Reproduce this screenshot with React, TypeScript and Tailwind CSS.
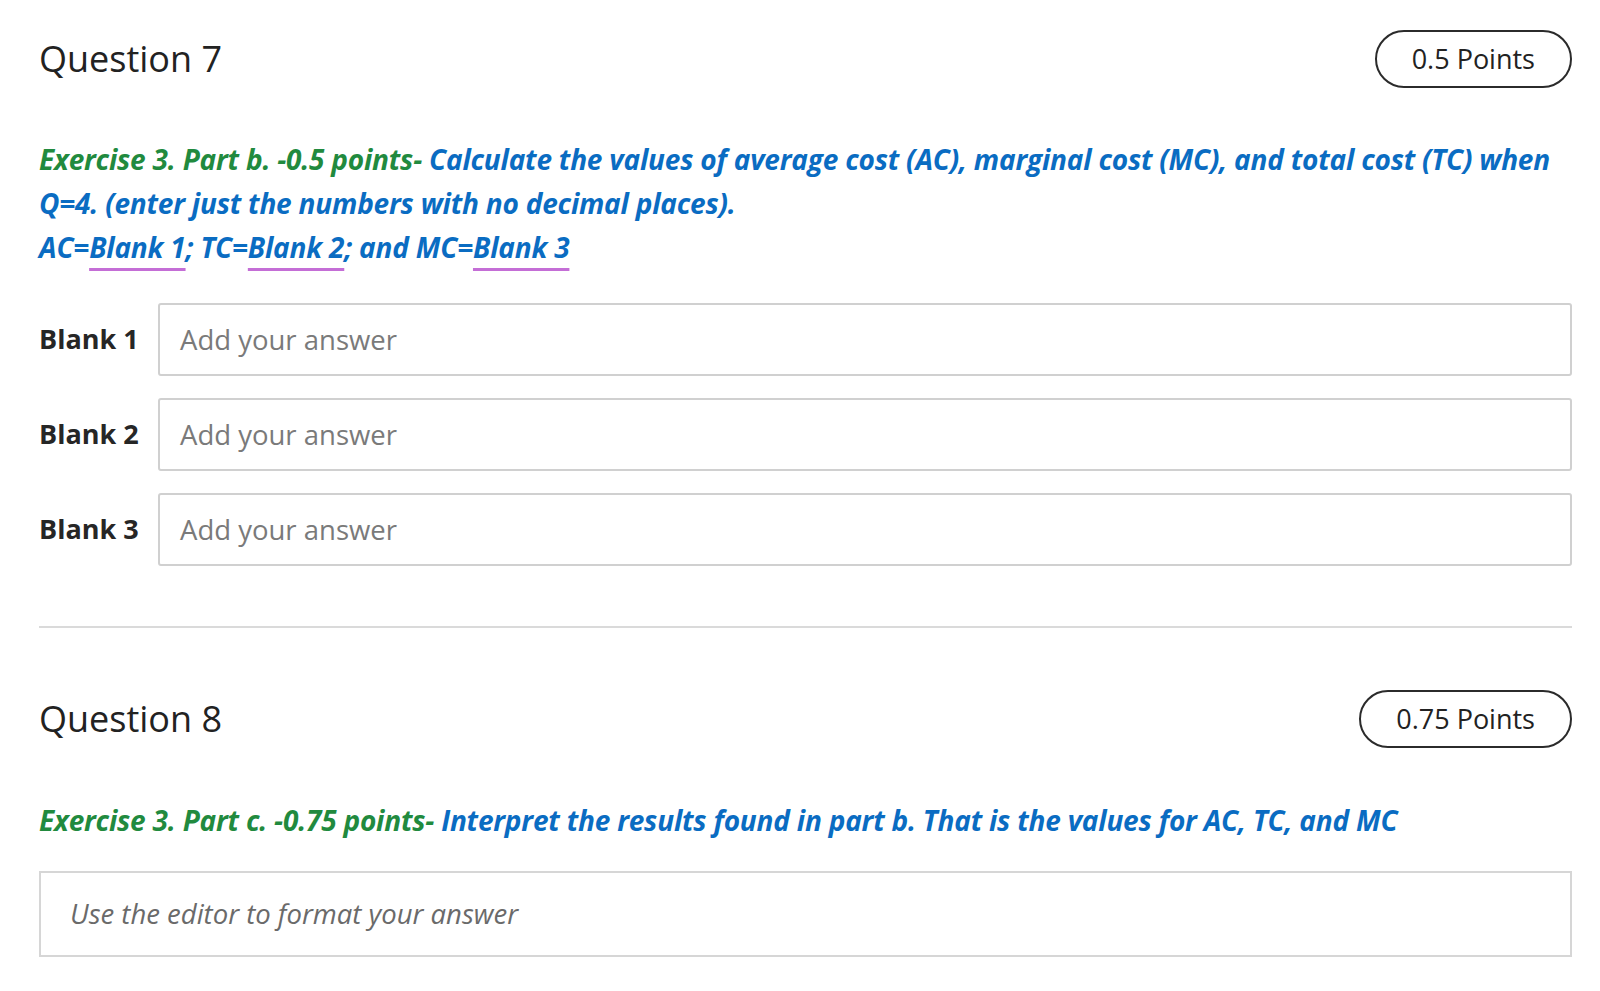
const font = { fontFamily: '"Open Sans", "Liberation Sans", sans-serif' };

function PointsPill({ label }: { label: string }) {
  return (
    <div className="flex h-[58px] items-center rounded-full border-2 border-[#2b2b2b] px-[35px] text-[27px] font-medium text-[#222222]">
      {label}
    </div>
  );
}

function Blank({ children }: { children: React.ReactNode }) {
  return (
    <span className="underline decoration-[#c46ed6] decoration-[3px] underline-offset-[10px]">
      {children}
    </span>
  );
}

function BlankRow({ n }: { n: number }) {
  return (
    <div className="flex items-center">
      <div className="w-[119px] shrink-0 text-[27px] font-bold text-[#262626]">Blank {n}</div>
      <div className="flex h-[73px] flex-1 items-center rounded-[3px] border-2 border-[#d0d0d0] px-[20px] text-[27.5px] text-[#7a7a7a]">
        Add your answer
      </div>
    </div>
  );
}

export default function App() {
  return (
    <div style={font} className="min-h-screen bg-white pl-[39px] pr-[28px] pt-[30px]">
      <div className="flex items-center justify-between">
        <h2 className="text-[36px] font-normal text-[#222222]">Question 7</h2>
        <PointsPill label="0.5 Points" />
      </div>

      <p className="mt-[49px] text-[28px] font-bold italic leading-[44px] tracking-[-0.2px] text-[#0a6cc2]">
        <span className="text-[#218a3e]">Exercise 3. Part b. -0.5 points- </span>
        Calculate the values of average cost (AC), marginal cost (MC), and total cost (TC) when Q=4. (enter just
        the numbers with no decimal places).
        <br />
        AC=<Blank>Blank 1</Blank>; TC=<Blank>Blank 2</Blank>; and MC=<Blank>Blank 3</Blank>
      </p>

      <div className="mt-[34px] flex flex-col gap-[22px]">
        <BlankRow n={1} />
        <BlankRow n={2} />
        <BlankRow n={3} />
      </div>

      <div className="mt-[60px] h-[2px] bg-[#dadada]" />

      <div className="mt-[62px] flex items-center justify-between">
        <h2 className="text-[36px] font-normal text-[#222222]">Question 8</h2>
        <PointsPill label="0.75 Points" />
      </div>

      <p className="mt-[50px] text-[28px] font-bold italic leading-[44px] tracking-[-0.2px] text-[#0a6cc2]">
        <span className="text-[#218a3e]">Exercise 3. Part c. -0.75 points- </span>
        Interpret the results found in part b. That is the values for AC, TC, and MC
      </p>

      <div className="mt-[29px] flex h-[86px] items-center border-2 border-[#d6d6d6] px-[29px] text-[27.5px] italic text-[#6a6a6a]">
        Use the editor to format your answer
      </div>
    </div>
  );
}
